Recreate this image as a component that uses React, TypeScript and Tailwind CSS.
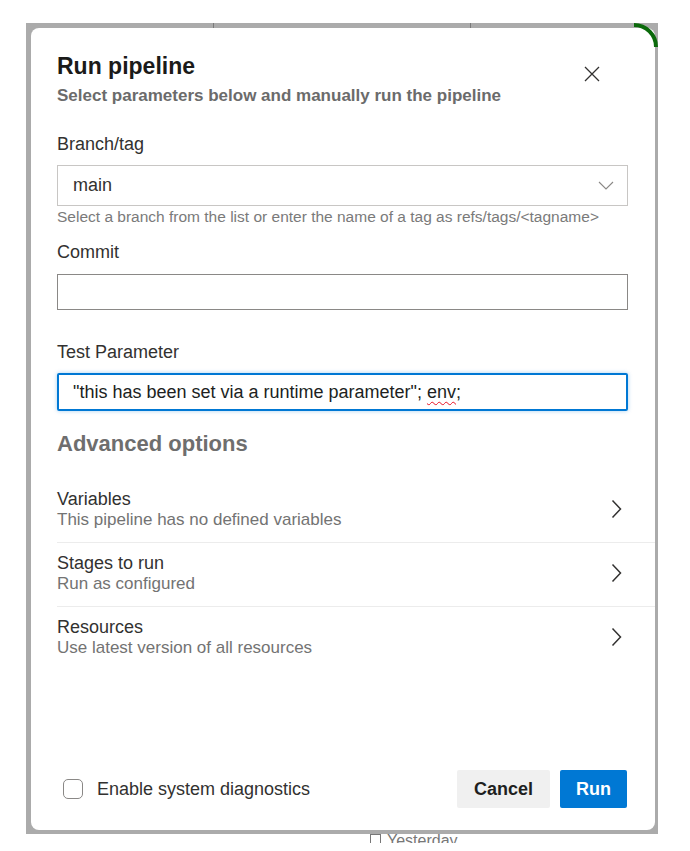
import React from 'react';

function CloseIcon() {
  return (
    <svg width="16" height="16" viewBox="0 0 16 16" fill="none" stroke="#323130" strokeWidth="1.3">
      <path d="M1 1 L15 15 M15 1 L1 15" />
    </svg>
  );
}

function ChevronDown() {
  return (
    <svg width="16" height="9" viewBox="0 0 16 9" fill="none" stroke="#8a8886" strokeWidth="1.1">
      <path d="M1 1 L8 8 L15 1" />
    </svg>
  );
}

function ChevronRight() {
  return (
    <svg width="11" height="20" viewBox="0 0 11 20" fill="none" stroke="#323130" strokeWidth="1.5">
      <path d="M1.5 1.5 L9.5 10 L1.5 18.5" />
    </svg>
  );
}

function OptionRow({ title, sub, last }: { title: string; sub: string; last?: boolean }) {
  return (
    <div className={`flex items-center justify-between pt-[9px] pb-[12px] ${last ? '' : 'border-b border-[#ececec]'}`}>
      <div className="flex flex-col">
        <span className="text-[18px] leading-[22px] text-[#323130]">{title}</span>
        <span className="text-[17px] leading-[20px] text-[#737373]">{sub}</span>
      </div>
      <div className="mr-[33px]">
        <ChevronRight />
      </div>
    </div>
  );
}

export default function App() {
  return (
    <div className="relative h-[851px] w-[690px] overflow-hidden bg-white font-['Liberation_Sans',Arial,sans-serif]">
      {/* dimmed page behind the dialog */}
      <div className="relative z-10 ml-[26px] mt-[23px] h-[811px] w-[632px] overflow-hidden bg-[#ababab] pl-[5px] pt-[5px]">
        <div className="absolute left-[187px] top-0 h-[5px] w-px bg-[#7a7a7a]" />
        <div className="absolute left-[444px] top-0 h-[5px] w-px bg-[#7a7a7a]" />

        <div className="relative z-10 flex h-[802px] w-[624px] flex-col rounded-[8px] bg-white pl-[26px] pr-[27px]">
          <div className="flex items-start justify-between pt-[25px]">
            <div className="flex flex-col">
              <h1 className="text-[23px] font-bold leading-[26px] text-[#1b1a19]">Run pipeline</h1>
              <p className="mt-[7px] text-[17px] font-bold leading-[20px] text-[#6b6b6b]">
                Select parameters below and manually run the pipeline
              </p>
            </div>
            <button className="mr-[28px] mt-[13px]">
              <CloseIcon />
            </button>
          </div>

          <label className="mt-[27px] text-[18px] leading-[22px] text-[#323130]">Branch/tag</label>
          <div className="mt-[10px] flex h-[41px] items-center justify-between border border-[#c8c6c4] pl-[15px] pr-[13px]">
            <span className="text-[18px] text-[#323130]">main</span>
            <ChevronDown />
          </div>
          <p className="mt-[3px] text-[15.5px] leading-[16px] text-[#7a7a7a]">
            Select a branch from the list or enter the name of a tag as refs/tags/&lt;tagname&gt;
          </p>

          <label className="mt-[16px] text-[18px] leading-[22px] text-[#323130]">Commit</label>
          <div className="mt-[11px] h-[36px] border border-[#8a8886]" />

          <label className="mt-[31px] text-[18px] leading-[22px] text-[#323130]">Test Parameter</label>
          <div className="mt-[10px] flex h-[38px] items-center rounded-[2px] border-2 border-[#0078d4] pl-[14px] shadow-[0_0_4px_rgba(0,120,212,0.35)]">
            <span className="text-[18px] text-[#201f1e]">
              "this has been set via a runtime parameter";{' '}
              <span className="underline decoration-[#e81123] decoration-wavy decoration-1 underline-offset-[3px]">env</span>;
            </span>
          </div>

          <h2 className="mt-[20px] text-[22px] font-bold leading-[26px] text-[#6e6e6e]">Advanced options</h2>

          <div className="-mr-[27px] mt-[22px] flex flex-col">
            <OptionRow title="Variables" sub="This pipeline has no defined variables" />
            <OptionRow title="Stages to run" sub="Run as configured" />
            <OptionRow title="Resources" sub="Use latest version of all resources" last />
          </div>

          <div className="mt-auto flex items-center justify-between pb-[22px]">
            <label className="ml-[6px] flex items-center gap-[14px]">
              <span className="h-[20px] w-[20px] rounded-[5px] border border-[#8a8886] bg-white" />
              <span className="text-[18px] text-[#323130]">Enable system diagnostics</span>
            </label>
            <div className="mr-px flex items-center gap-[10px]">
              <button className="h-[38px] w-[93px] rounded-[2px] bg-[#f0f0f0] text-[18px] font-bold text-[#201f1e]">
                Cancel
              </button>
              <button className="h-[38px] w-[67px] rounded-[2px] bg-[#0078d4] text-[18px] font-bold text-white">
                Run
              </button>
            </div>
          </div>
        </div>

        {/* status spinner from the page, drawn over the dialog corner */}
        <svg className="absolute left-[583px] top-[-1px] z-20" width="50" height="50" viewBox="0 0 50 50" fill="none">
          <path d="M25 3 A22 22 0 0 1 47 25" stroke="#0b6a0b" strokeWidth="4" />
        </svg>
      </div>

      {/* page content peeking out below the overlay */}
      <div className="absolute left-[370px] top-[832px] flex h-[11px] items-start gap-[6px] overflow-hidden">
        <span className="mt-[2px] h-[10px] w-[11px] border border-[#777]" />
        <span className="text-[16px] leading-[18px] text-[#777]">Yesterday</span>
      </div>
    </div>
  );
}
